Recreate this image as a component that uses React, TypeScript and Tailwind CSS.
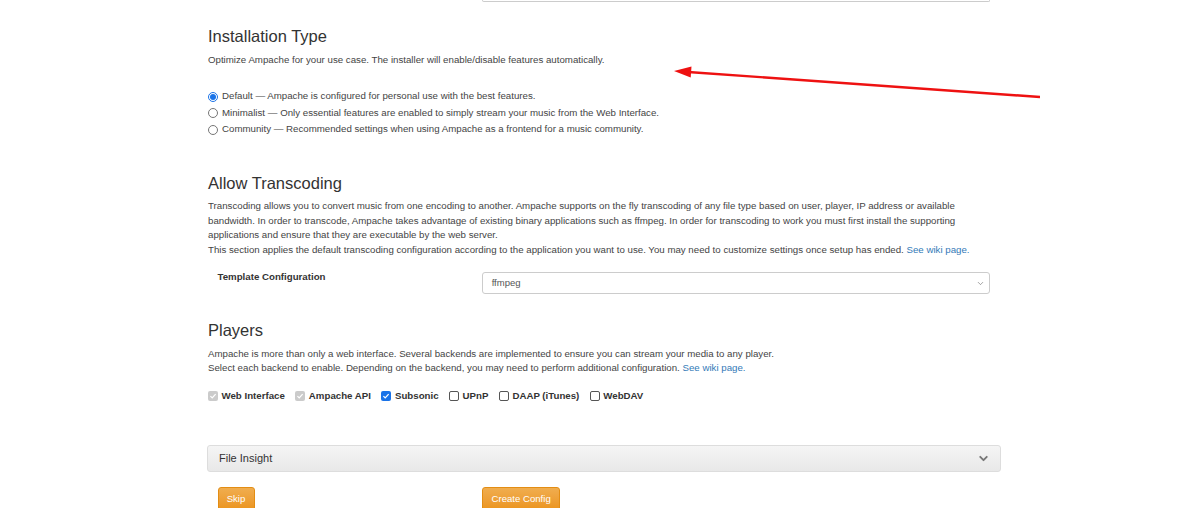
import { ChevronDown } from 'lucide-react'

const radios = [
  { label: 'Default', text: 'Ampache is configured for personal use with the best features.', checked: true },
  { label: 'Minimalist', text: 'Only essential features are enabled to simply stream your music from the Web Interface.' },
  { label: 'Community', text: 'Recommended settings when using Ampache as a frontend for a music community.' },
]

type CheckState = 'disabled' | 'on' | 'off'

const players: { label: string; state: CheckState }[] = [
  { label: 'Web Interface', state: 'disabled' },
  { label: 'Ampache API', state: 'disabled' },
  { label: 'Subsonic', state: 'on' },
  { label: 'UPnP', state: 'off' },
  { label: 'DAAP (iTunes)', state: 'off' },
  { label: 'WebDAV', state: 'off' },
]

function Radio({ checked }: { checked?: boolean }) {
  return (
    <span
      className={`w-[10px] h-[10px] rounded-full border flex items-center justify-center shrink-0 bg-white ${
        checked ? 'border-[#1a73e8]' : 'border-[#767676]'
      }`}
    >
      {checked && <span className="w-[6px] h-[6px] rounded-full bg-[#1a73e8]" />}
    </span>
  )
}

function Check({ state }: { state: CheckState }) {
  if (state === 'off') {
    return <span className="w-[10px] h-[10px] rounded-[2px] border border-[#555] bg-white shrink-0" />
  }
  return (
    <span
      className={`w-[10px] h-[10px] rounded-[2px] flex items-center justify-center shrink-0 ${
        state === 'on' ? 'bg-[#1a73e8]' : 'bg-[#cbcbcb]'
      }`}
    >
      <svg viewBox="0 0 10 10" className="w-[8px] h-[8px]">
        <path d="M1.8 5.2 L4 7.3 L8.3 2.6" fill="none" stroke="white" strokeWidth="1.6" />
      </svg>
    </span>
  )
}

function Heading({ children, className = '' }: { children: React.ReactNode; className?: string }) {
  return <h3 className={`text-[16.5px] leading-[20px] text-[#333] ${className}`}>{children}</h3>
}

export default function App() {
  return (
    <div className="relative w-full h-[508px] overflow-hidden bg-white font-['Liberation_Sans',Arial,sans-serif] text-[#444]">
      <div className="ml-[207px] w-[794px]">
        {/* end of the previous input */}
        <div className="flex">
          <div className="w-1/3" />
          <div className="w-2/3 px-[10.5px]">
            <div className="h-[2px] border-x border-b border-[#ccc] rounded-b-[3px]" />
          </div>
        </div>

        <Heading className="mt-[24px] pl-px">Installation Type</Heading>
        <p className="mt-[7px] text-[9.7px] leading-[14.5px] pl-px">
          Optimize Ampache for your use case. The installer will enable/disable features automatically.
        </p>

        <div className="mt-[21px] pl-px">
          {radios.map((r) => (
            <label key={r.label} className="flex items-center gap-[4px] h-[16.5px] text-[9.7px]">
              <Radio checked={r.checked} />
              <span>
                {r.label} — {r.text}
              </span>
            </label>
          ))}
        </div>

        <Heading className="mt-[35px] pl-px">Allow Transcoding</Heading>
        <p className="mt-[6px] text-[9.7px] leading-[14.5px] pl-px">
          Transcoding allows you to convert music from one encoding to another. Ampache supports on the fly
          transcoding of any file type based on user, player, IP address or available bandwidth. In order to
          transcode, Ampache takes advantage of existing binary applications such as ffmpeg. In order for transcoding
          to work you must first install the supporting applications and ensure that they are executable by the web
          server.
          <br />
          This section applies the default transcoding configuration according to the application you want to use.
          You may need to customize settings once setup has ended.{' '}
          <a className="text-[#337ab7]">See wiki page.</a>
        </p>

        <div className="mt-[15px] flex items-start">
          <div className="w-1/3 px-[10.5px]">
            <span className="block text-[9.7px] leading-[10px] font-bold text-[#333]">Template Configuration</span>
          </div>
          <div className="w-2/3 px-[10.5px]">
            <div className="h-[22px] border border-[#ccc] rounded-[3px] bg-white flex items-center justify-between pl-[8.5px] pr-[4px] text-[9.5px] text-[#555]">
              <span>ffmpeg</span>
              <ChevronDown size={9} strokeWidth={1.6} className="text-[#666]" />
            </div>
          </div>
        </div>

        <Heading className="mt-[26px] pl-px">Players</Heading>
        <p className="mt-[7px] text-[9.7px] leading-[14px] pl-px">
          Ampache is more than only a web interface. Several backends are implemented to ensure you can stream your
          media to any player.
          <br />
          Select each backend to enable. Depending on the backend, you may need to perform additional configuration.{' '}
          <a className="text-[#337ab7]">See wiki page.</a>
        </p>

        <div className="mt-[14px] h-[14px] flex items-center gap-[10.5px] pl-px">
          {players.map((p) => (
            <label key={p.label} className="flex items-center gap-[3.5px] text-[9.7px] font-bold text-[#333]">
              <Check state={p.state} />
              <span>{p.label}</span>
            </label>
          ))}
        </div>

        <div className="mt-[42px] h-[27px] rounded-[3px] border border-[#ddd] bg-gradient-to-b from-[#f5f5f5] to-[#e8e8e8] flex items-center justify-between pl-[11px] pr-[10px]">
          <span className="text-[11px] text-[#333]">File Insight</span>
          <ChevronDown size={13} strokeWidth={3.5} className="text-[#777]" />
        </div>

        <div className="mt-[13px] flex">
          <div className="w-1/3 px-[10.5px]">
            <button className="h-[25px] w-[37px] rounded-[3px] border border-[#e38d13] bg-gradient-to-b from-[#f0ad4e] to-[#eb9316] text-white text-[9.6px]">
              Skip
            </button>
          </div>
          <div className="w-2/3 px-[10.5px]">
            <button className="h-[25px] w-[78px] rounded-[3px] border border-[#e38d13] bg-gradient-to-b from-[#f0ad4e] to-[#eb9316] text-white text-[9.6px]">
              Create Config
            </button>
          </div>
        </div>
      </div>

      {/* annotation arrow */}
      <svg className="absolute inset-0 pointer-events-none" width="1200" height="508" viewBox="0 0 1200 508">
        <line x1="1040" y1="97" x2="688" y2="72" stroke="#ee1111" strokeWidth="2.4" />
        <polygon points="674,71 691.5,66.4 690.7,77.4" fill="#ee1111" />
      </svg>
    </div>
  )
}
